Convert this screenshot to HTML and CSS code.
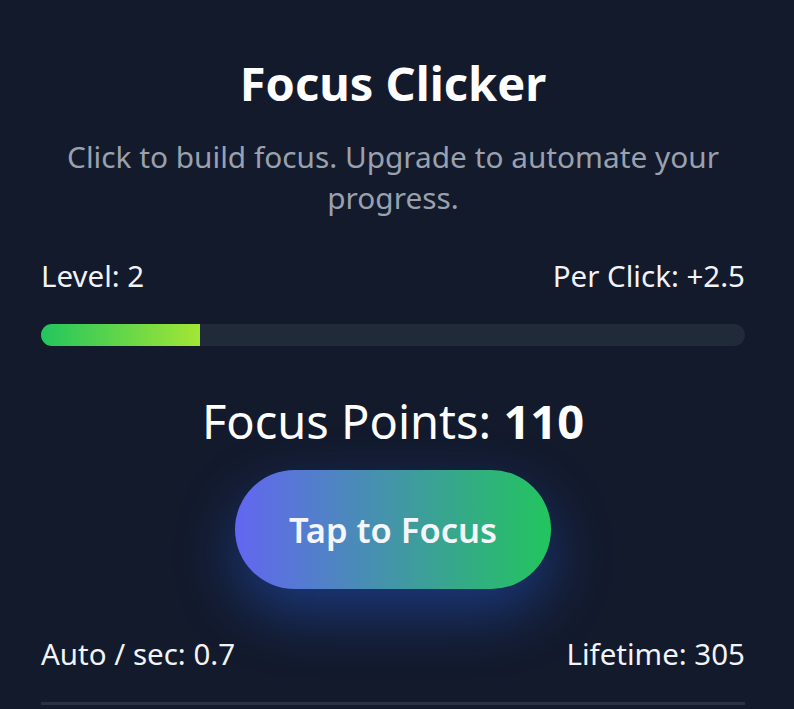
FILE: index.html
```html
<!DOCTYPE html>
<html lang="en">

<head>
	<meta charset="UTF-8" />
	<meta name="viewport" content="width=device-width, initial-scale=1.0" />
	<title>Focus Clicker</title>
	<link rel="stylesheet" href="styles.css">
</head>

<body>
	<div class="card">
		<h1 class="title">Focus Clicker</h1>
		<p class="subtitle">Click to build focus. Upgrade to automate your progress.</p>

		<div class="row stats">
			<span>Level: 2</span>
			<span>Per Click: +2.5</span>
		</div>

		<div class="bar">
			<div class="fill" style="width: 22.6%"></div>
		</div>

		<div class="points">Focus Points: <b>110</b></div>

		<div class="btn-wrap">
			<a class="tap" href="javascript:;">Tap to Focus</a>
		</div>

		<div class="row auto">
			<span>Auto / sec: 0.7</span>
			<span>Lifetime: 305</span>
		</div>

		<div class="upgrades"></div>
	</div>
</body>

</html>
```

FILE: styles.css
```css
* {
	margin: 0;
	padding: 0;
	box-sizing: border-box;
}

body {
	background-color: #131a2c;
	font-family: "Noto Sans", "Open Sans", sans-serif;
	color: #eef1f6;
	overflow: hidden;
}

.card {
	width: 786px;
	padding: 58px 41px 0 41px;
}

.title {
	font-size: 47px;
	font-weight: 700;
	line-height: 50px;
	text-align: center;
	color: #ffffff;
}

.subtitle {
	margin-top: 28px;
	font-size: 29.8px;
	line-height: 41px;
	text-align: center;
	color: #9aa1ae;
}

.row {
	display: flex;
	justify-content: space-between;
	font-size: 29.5px;
	line-height: 34px;
	color: #f1f3f7;
}

.stats {
	margin-top: 41px;
}

.bar {
	margin-top: 31px;
	height: 22px;
	border-radius: 11px;
	background-color: #212a38;
	overflow: hidden;
}

.fill {
	height: 100%;
	background: linear-gradient(90deg, #22c55e, #a3e635);
}

.points {
	margin-top: 48px;
	font-size: 47px;
	line-height: 54px;
	text-align: center;
	color: #ffffff;
}

.points b {
	font-weight: 700;
}

.btn-wrap {
	margin-top: 22px;
	display: flex;
	justify-content: center;
}

.tap {
	width: 316px;
	height: 119px;
	border-radius: 60px;
	display: flex;
	align-items: center;
	justify-content: center;
	background: linear-gradient(90deg, #6366f1, #22c55e);
	color: #f4f6fb;
	font-size: 34.5px;
	font-weight: 600;
	text-decoration: none;
	box-shadow: 0 24px 60px rgba(37, 99, 235, 0.42);
}

.auto {
	margin-top: 48px;
}

.upgrades {
	margin-top: 31px;
	border-top: 3px solid #2a3242;
	height: 40px;
}
```
